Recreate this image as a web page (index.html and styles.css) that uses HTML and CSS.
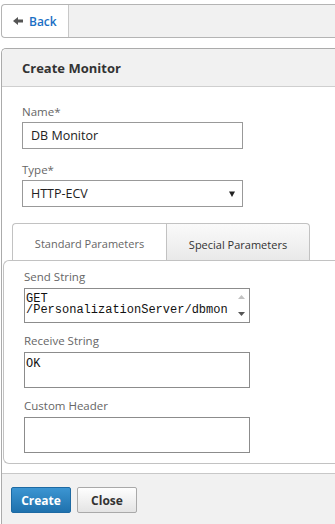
FILE: index.html
```html
<!DOCTYPE html>
<html>
<head>
<meta charset="utf-8">
<link rel="stylesheet" href="styles.css">
</head>
<body>
<div class="topbar">
  <a class="back" href="#">
    <svg class="back-icon" width="10" height="8" viewBox="0 0 10 8"><path d="M0 4 L5 0 V2.5 H10 V5.5 H5 V8 Z" fill="#555"/></svg>
    <span>Back</span>
  </a>
</div>
<div class="panel">
  <div class="panel-head">Create Monitor</div>
  <div class="panel-body">
    <div class="field">
      <label class="label">Name*</label>
      <input class="input" type="text" value="DB Monitor">
    </div>
    <div class="field field-last">
      <label class="label">Type*</label>
      <div class="input select">
        <span>HTTP-ECV</span>
        <svg width="6" height="6" viewBox="0 0 6 6"><path d="M0 0.5 H6 L3 6 Z" fill="#222"/></svg>
      </div>
    </div>
    <div class="tabs">
      <div class="tab">Standard Parameters</div>
      <div class="tab active">Special Parameters</div>
    </div>
    <div class="tab-content">
      <label class="label">Send String</label>
      <div class="area scroll-area">
        <textarea class="area-text">GET
/PersonalizationServer/dbmon</textarea>
        <div class="scrollbar">
          <svg width="7" height="4" viewBox="0 0 7 4"><path d="M0 4 H7 L3.5 0 Z" fill="#c2c2c2"/></svg>
          <svg width="7" height="4" viewBox="0 0 7 4"><path d="M0 0 H7 L3.5 4 Z" fill="#555"/></svg>
        </div>
      </div>
      <label class="label">Receive String</label>
      <textarea class="area area-text">OK</textarea>
      <label class="label">Custom Header</label>
      <textarea class="area area-text"></textarea>
    </div>
  </div>
  <div class="panel-foot">
    <button class="btn btn-primary">Create</button>
    <button class="btn">Close</button>
  </div>
</div>
</body>
</html>
```
FILE: styles.css
```css
html, body {
  margin: 0;
  padding: 0;
  background: #fff;
  font-family: "Open Sans", "Noto Sans", sans-serif;
  color: #333;
  overflow: hidden;
}

body {
  height: 100vh;
  display: flex;
  flex-direction: column;
}

.topbar {
  flex: none;
  margin: 4px 0 0 1px;
  height: 32px;
  border: 1px solid #b4b4b4;
  border-right: none;
  border-radius: 4px 0 0 4px;
  background: #f1f1f1;
  display: flex;
}

.back {
  width: 67px;
  background: #fff;
  border-right: 1px solid #c8c8c8;
  border-radius: 4px 0 0 4px;
  display: flex;
  align-items: center;
  padding-left: 11px;
  box-sizing: border-box;
  text-decoration: none;
  color: #1a6fc4;
  font-weight: 600;
  font-size: 12px;
}

.back-icon {
  margin-right: 6px;
}

.panel {
  flex: 1;
  margin: 10px 0 0 1px;
  border-left: 1px solid #ababab;
  border-top: 1px solid #ababab;
  border-radius: 5px 0 0 0;
  display: flex;
  flex-direction: column;
}

.panel-head {
  height: 37px;
  background: #f1f1f1;
  border-bottom: 1px solid #cfcfcf;
  border-radius: 5px 0 0 0;
  display: flex;
  align-items: center;
  padding-left: 20px;
  font-weight: 700;
  font-size: 13px;
  color: #333;
}

.panel-body {
  padding: 17px 0 9px 1px;
}

.field {
  margin-left: 19px;
  margin-bottom: 13px;
  display: flex;
  flex-direction: column;
  align-items: flex-start;
}

.field-last {
  margin-bottom: 16px;
}

.label {
  display: block;
  font-size: 11.5px;
  line-height: 16px;
  color: #666;
  margin-bottom: 2px;
}

.input {
  box-sizing: border-box;
  width: 221px;
  height: 27px;
  border: 1px solid #999;
  margin: 0;
  padding: 0 8px;
  font-family: "Open Sans", "Noto Sans", sans-serif;
  font-size: 12.5px;
  color: #222;
  background: #fff;
  outline: none;
}

.select {
  display: flex;
  align-items: center;
  justify-content: space-between;
  padding: 0 7px 0 8px;
}

.tabs {
  margin-left: 9px;
  display: flex;
  height: 37px;
}

.tab {
  box-sizing: border-box;
  width: 154px;
  border: 1px solid #c2c2c2;
  border-right: none;
  border-bottom: none;
  border-radius: 4px 0 0 0;
  background: #fff;
  display: flex;
  align-items: center;
  justify-content: center;
  padding-top: 2px;
  font-size: 11px;
  color: #666;
}

.tab.active {
  width: 144px;
  border-right: 1px solid #c2c2c2;
  border-radius: 0 4px 0 0;
  background: linear-gradient(#fafafa, #e9e9e9);
  color: #333;
  padding-top: 4px;
}

.tab-content {
  border-top: 1px solid #c2c2c2;
  border-left: 1px solid #c2c2c2;
  border-bottom: 1px solid #c2c2c2;
  border-radius: 6px 0 0 6px;
  padding: 8px 0 10px 20px;
}

.tab-content .label {
  margin-bottom: 3px;
}

.area {
  box-sizing: border-box;
  display: block;
  width: 226px;
  height: 36px;
  border: 1px solid #8c8c8c;
  margin: 0 0 10px 0;
  background: #fff;
}

.area:last-child {
  margin-bottom: 0;
}

.area-text {
  font-family: "Liberation Mono", "DejaVu Sans Mono", monospace;
  font-size: 12px;
  line-height: 12px;
  color: #111;
  padding: 5px 1px 3px;
  resize: none;
  outline: none;
  overflow: hidden;
}

.scroll-area {
  height: 35px;
  display: flex;
}

.scroll-area .area-text {
  flex: 1;
  border: none;
  margin: 0;
  padding: 5px 1px 0;
  white-space: pre;
  line-height: 11px;
}

.scrollbar {
  width: 16px;
  display: flex;
  flex-direction: column;
  justify-content: space-between;
  align-items: center;
  padding: 6px 0 6px;
  box-sizing: border-box;
}

.panel-foot {
  flex: 1;
  border-top: 1px solid #c8c8c8;
  background: #f1f1f1;
  padding: 13px 0 0 9px;
  display: flex;
  align-items: flex-start;
  gap: 6px;
}

.btn {
  box-sizing: border-box;
  width: 60px;
  height: 26px;
  border: 1px solid #a9a9a9;
  border-radius: 2px;
  background: linear-gradient(#fefefe, #e4e4e4);
  font-family: "Open Sans", "Noto Sans", sans-serif;
  font-weight: 700;
  font-size: 12px;
  color: #333;
  padding: 0;
  margin: 0;
}

.btn-primary {
  border-color: #1d6aa3;
  background: linear-gradient(#3c95d2, #1f71ad);
  color: #fff;
}
```
